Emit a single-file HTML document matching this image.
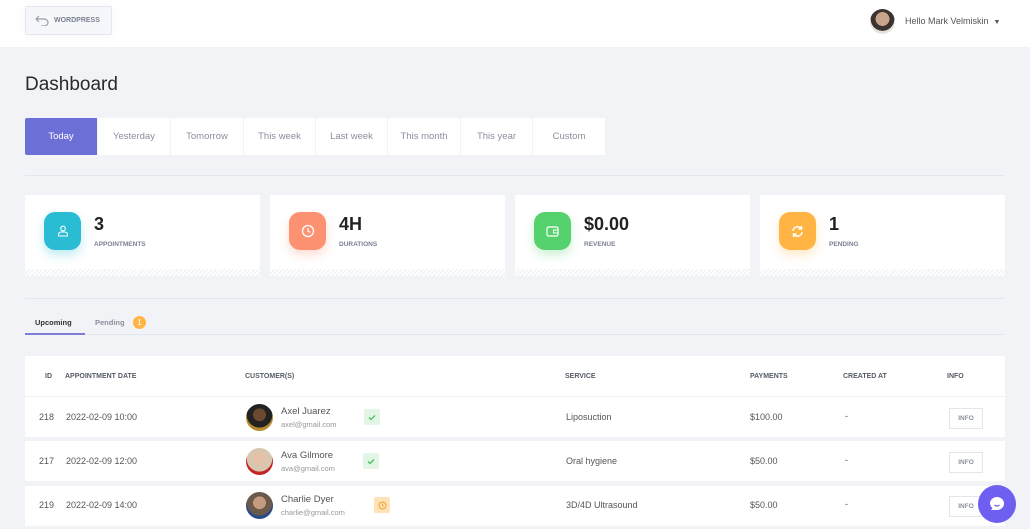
<!DOCTYPE html>
<html><head><meta charset="utf-8"><style>
*{box-sizing:border-box;margin:0;padding:0}
body{width:1030px;height:529px;overflow:hidden;background:#f1f3f7;font-family:"Liberation Sans",sans-serif;position:relative;color:#333}
.abs{position:absolute}
.hdr{left:0;top:0;width:1030px;height:47px;background:#fff}
.wp{left:25px;top:6px;width:87px;height:29px;border:1px solid #e4e7ee;background:#f6f7fa;border-radius:2px;font-size:7px;font-weight:bold;color:#7a8090;display:flex;align-items:center;padding-left:28px;box-shadow:0 0 12px rgba(0,0,0,.04)}
.tabs{left:25px;top:118px;display:flex;gap:1px}
.tab{width:72px;height:37px;background:#fff;font-size:9.5px;color:#8a8f9c;display:flex;align-items:center;justify-content:center}
.tab.on{background:#6b6fd6;color:#fff;border-radius:2px 0 0 2px}
.hr{height:1px;background:#e3e6ec}
.card{top:195px;width:235px;height:81px;background:#fff;overflow:hidden}
.card .hatch{position:absolute;left:0;bottom:0;width:100%;height:7px;background:repeating-linear-gradient(135deg,#eceef2 0 1px,#fff 1px 3px)}
.ic{position:absolute;left:19px;top:17px;width:37px;height:38px;border-radius:11px;display:flex;align-items:center;justify-content:center}
.num{position:absolute;left:69px;top:19px;font-size:18px;font-weight:bold;color:#222}
.lbl{position:absolute;left:69px;top:46px;font-size:6.5px;font-weight:bold;color:#7a8090}
.th{font-size:7px;font-weight:bold;color:#555b66;position:absolute;top:17px}
.row{left:25px;width:980px;height:40px;background:#fff}
.row span{position:absolute;font-size:9px;color:#555}
.av{position:absolute;left:221px;top:7px;width:27px;height:27px;border-radius:50%}
.chk{position:absolute;width:16px;height:16px;border-radius:2px;background:#e3f6e6;display:flex;align-items:center;justify-content:center}
.info{position:absolute;left:924px;top:11px;width:34px;height:21px;border:1px solid #e3e6ec;font-size:6.5px;font-weight:bold;color:#8a8f9c;display:flex;align-items:center;justify-content:center}
</style></head><body>
<div class="abs hdr"></div>
<div class="abs wp"><svg class="abs" style="left:9px;top:8px" width="14" height="11" viewBox="0 0 14 11"><path d="M4 1L1 4l3 3M1 4h8a4 3.5 0 010 7H6" fill="none" stroke="#9aa0ad" stroke-width="1.2"/></svg>WORDPRESS</div>
<div class="abs" style="left:870px;top:9px;width:25px;height:25px;border-radius:50%;background:radial-gradient(circle at 50% 40%,#c9a48c 0 35%,#3a3330 36% 60%,#e8e2dc 61%)"></div>
<div class="abs" style="left:905px;top:16px;font-size:9px;color:#555">Hello Mark Velmiskin &nbsp;<span style="font-size:7px">&#9660;</span></div>
<div class="abs" style="left:25px;top:74px;font-size:19px;color:#2a2a2a">Dashboard</div>
<div class="abs tabs">
<div class="tab on">Today</div><div class="tab">Yesterday</div><div class="tab">Tomorrow</div><div class="tab" style="width:71px">This week</div><div class="tab" style="width:71px">Last week</div><div class="tab">This month</div><div class="tab" style="width:71px">This year</div><div class="tab">Custom</div>
</div>
<div class="abs hr" style="left:25px;top:175px;width:980px"></div>
<div class="abs card" style="left:25px"><div class="ic" style="background:#29bcd3;box-shadow:0 5px 10px rgba(41,188,211,.3)"><svg width="12" height="12" viewBox="0 0 12 12"><circle cx="6" cy="3.5" r="2.3" fill="none" stroke="#fff" stroke-width="1.1"/><path d="M1.5 11V9.5a2.5 2.5 0 012.5-2.5h4a2.5 2.5 0 012.5 2.5V11z" fill="none" stroke="#fff" stroke-width="1.1"/></svg></div><div class="num">3</div><div class="lbl">APPOINTMENTS</div><div class="hatch"></div></div>
<div class="abs card" style="left:270px"><div class="ic" style="background:#fd9272;box-shadow:0 5px 10px rgba(253,146,114,.3)"><svg width="14" height="14" viewBox="0 0 14 14"><circle cx="7" cy="7" r="5.5" fill="none" stroke="#fff" stroke-width="1.3"/><path d="M7 4v3l2 1.5" fill="none" stroke="#fff" stroke-width="1.3"/></svg></div><div class="num">4H</div><div class="lbl">DURATIONS</div><div class="hatch"></div></div>
<div class="abs card" style="left:515px"><div class="ic" style="background:#55d16e;box-shadow:0 5px 10px rgba(85,209,110,.3)"><svg width="13" height="11" viewBox="0 0 13 11"><rect x="1" y="1" width="11" height="9" rx="1.5" fill="none" stroke="#fff" stroke-width="1.2"/><rect x="7.5" y="4" width="4.5" height="3" fill="none" stroke="#fff" stroke-width="1"/></svg></div><div class="num">$0.00</div><div class="lbl">REVENUE</div><div class="hatch"></div></div>
<div class="abs card" style="left:760px;width:245px"><div class="ic" style="background:#ffb444;box-shadow:0 5px 10px rgba(255,180,68,.3)"><svg width="13" height="13" viewBox="0 0 13 13"><path d="M2 6a4.5 4.5 0 018-2.5M11 7a4.5 4.5 0 01-8 2.5" fill="none" stroke="#fff" stroke-width="1.4"/><path d="M10.5 1v3h-3M2.5 12V9h3" fill="none" stroke="#fff" stroke-width="1.4"/></svg></div><div class="num">1</div><div class="lbl">PENDING</div><div class="hatch"></div></div>
<div class="abs hr" style="left:25px;top:298px;width:980px"></div>
<div class="abs" style="left:35px;top:318px;font-size:7.5px;font-weight:bold;color:#333">Upcoming</div>
<div class="abs" style="left:95px;top:318px;font-size:7.5px;font-weight:bold;color:#8a8f9c">Pending</div>
<div class="abs" style="left:133px;top:316px;width:13px;height:13px;border-radius:50%;background:#ffb444;color:#fff;font-size:8px;text-align:center;line-height:13px">1</div>
<div class="abs hr" style="left:25px;top:334px;width:980px"></div>
<div class="abs" style="left:25px;top:333px;width:60px;height:2px;background:#7b7fd8"></div>
<div class="abs" style="left:25px;top:356px;width:980px;height:40px;background:#fff">
<div class="th" style="left:20px">ID</div><div class="th" style="left:40px">APPOINTMENT DATE</div><div class="th" style="left:220px">CUSTOMER(S)</div><div class="th" style="left:540px">SERVICE</div><div class="th" style="left:725px">PAYMENTS</div><div class="th" style="left:818px">CREATED AT</div><div class="th" style="left:922px">INFO</div></div>
<div class="abs row" style="top:397px"><span style="left:14px;top:15px">218</span><span style="left:41px;top:15px">2022-02-09 10:00</span><div class="av" style="background:radial-gradient(circle at 50% 40%,#6b4a30 0 30%,#222 31% 60%,#b58a2a 61%)"></div><span style="left:256px;top:9px;font-size:9.5px">Axel Juarez</span><span style="left:256px;top:23px;font-size:7.5px;color:#999">axel@gmail.com</span><div class="chk" style="left:339px;top:12px"><svg width="8" height="7" viewBox="0 0 8 7"><path d="M1 3.5l2 2 4-4" fill="none" stroke="#4cbb63" stroke-width="1.3"/></svg></div><span style="left:541px;top:15px">Liposuction</span><span style="left:725px;top:15px">$100.00</span><span style="left:820px;top:14px">-</span><div class="info">INFO</div></div>
<div class="abs row" style="top:441px"><span style="left:14px;top:15px">217</span><span style="left:41px;top:15px">2022-02-09 12:00</span><div class="av" style="background:radial-gradient(circle at 50% 40%,#e5c1a8 0 30%,#d8c7b0 31% 60%,#c42424 61%)"></div><span style="left:256px;top:9px;font-size:9.5px">Ava Gilmore</span><span style="left:256px;top:23px;font-size:7.5px;color:#999">ava@gmail.com</span><div class="chk" style="left:338px;top:12px"><svg width="8" height="7" viewBox="0 0 8 7"><path d="M1 3.5l2 2 4-4" fill="none" stroke="#4cbb63" stroke-width="1.3"/></svg></div><span style="left:541px;top:15px">Oral hygiene</span><span style="left:725px;top:15px">$50.00</span><span style="left:820px;top:14px">-</span><div class="info">INFO</div></div>
<div class="abs row" style="top:486px"><span style="left:14px;top:14px">219</span><span style="left:41px;top:14px">2022-02-09 14:00</span><div class="av" style="top:6px;background:radial-gradient(circle at 50% 40%,#c49a80 0 30%,#6b5a4a 31% 60%,#2a4a8a 61%)"></div><span style="left:256px;top:8px;font-size:9.5px">Charlie Dyer</span><span style="left:256px;top:22px;font-size:7.5px;color:#999">charlie@gmail.com</span><div class="chk" style="left:349px;top:11px;background:#ffe3b8"><svg width="9" height="9" viewBox="0 0 9 9"><circle cx="4.5" cy="4.5" r="3.5" fill="none" stroke="#f0a030" stroke-width="1"/><path d="M4.5 2.5v2l1.3 1" fill="none" stroke="#f0a030" stroke-width="1"/></svg></div><span style="left:541px;top:14px">3D/4D Ultrasound</span><span style="left:725px;top:14px">$50.00</span><span style="left:820px;top:13px">-</span><div class="info" style="top:10px">INFO</div></div>
<div class="abs" style="left:978px;top:485px;width:38px;height:38px;border-radius:50%;background:#6e5ff0;display:flex;align-items:center;justify-content:center"><svg width="18" height="18" viewBox="0 0 18 18"><path d="M9 2a7 6.5 0 017 6.5 7 6.5 0 01-7 6.5H3l1.5-2A7 6.5 0 012 8.5 7 6.5 0 019 2z" fill="#fff"/><path d="M6.5 10q2.5 2 5 0" fill="none" stroke="#6e5ff0" stroke-width="1.2"/></svg></div>
</body></html>
